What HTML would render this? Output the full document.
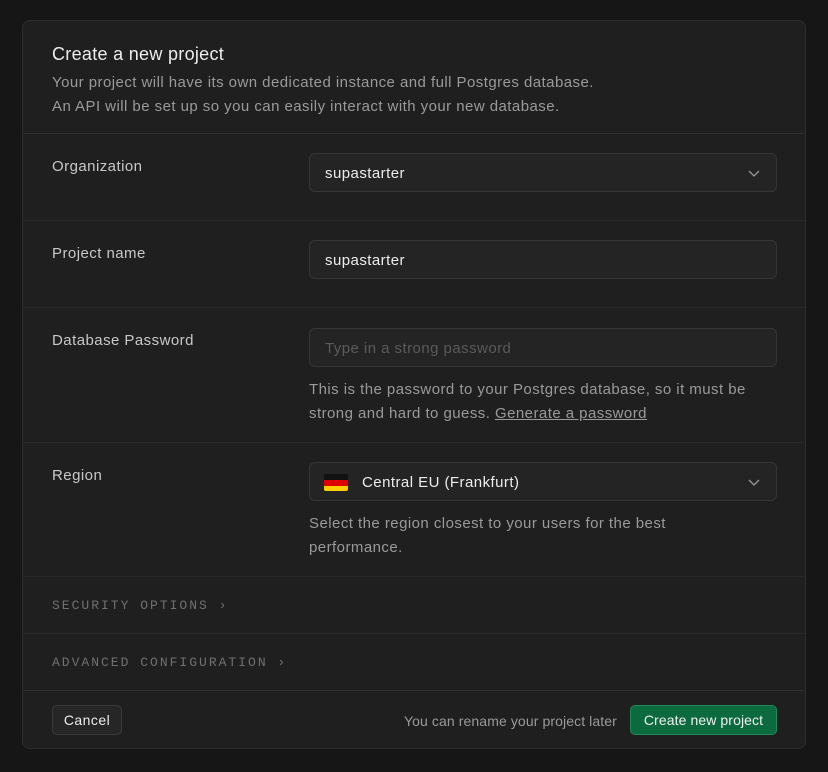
<!DOCTYPE html>
<html><head><style>
*{box-sizing:border-box;margin:0;padding:0}
body{width:828px;height:772px;background:#161616;font-family:"Liberation Sans",sans-serif;position:relative;overflow:hidden;color:#ededed;letter-spacing:0.45px}
.card{position:absolute;left:22px;top:20px;width:784px;height:729px;background:#1f1f1f;border:1px solid #2e2e2e;border-radius:8px;overflow:hidden}
.a{position:absolute}
.hr{position:absolute;left:0;width:100%;height:1px;background:#292929}
.lbl{position:absolute;left:29px;font-size:15px;color:#c8c8c8}
.inp{position:absolute;left:286px;width:468px;height:39px;border:1px solid #363636;border-radius:6px;background:#242424;font-size:15px;padding:0 15px;line-height:39px;color:#ededed}
.help{position:absolute;left:286px;font-size:15px;color:#9a9a9a;line-height:24px}
.mono{position:absolute;left:29px;font-family:"Liberation Mono",monospace;font-size:13px;letter-spacing:2px;color:#707070}
.chev{position:absolute;right:16px;top:13px}
</style></head><body>
<div class="card">
 <div class="a" style="left:29px;top:23px;font-size:18px;color:#ededed;letter-spacing:0.3px">Create a new project</div>
 <div class="a" style="left:29px;top:50px;font-size:15px;color:#9a9a9a;line-height:24px">Your project will have its own dedicated instance and full Postgres database.<br>An API will be set up so you can easily interact with your new database.</div>
 <div class="hr" style="top:112px;background:#2e2e2e"></div>
 <div class="lbl" style="top:137px">Organization</div>
 <div class="inp" style="top:132px">supastarter<svg class="chev" width="12" height="12" viewBox="0 0 12 12"><path d="M1 4l5 5 5-5" fill="none" stroke="#9a9a9a" stroke-width="1.3"/></svg></div>
 <div class="hr" style="top:199px"></div>
 <div class="lbl" style="top:224px">Project name</div>
 <div class="inp" style="top:219px">supastarter</div>
 <div class="hr" style="top:286px"></div>
 <div class="lbl" style="top:311px">Database Password</div>
 <div class="inp" style="top:307px;color:#5a5a5a">Type in a strong password</div>
 <div class="help" style="top:357px">This is the password to your Postgres database, so it must be<br>strong and hard to guess. <span style="text-decoration:underline">Generate a password</span></div>
 <div class="hr" style="top:421px"></div>
 <div class="lbl" style="top:446px">Region</div>
 <div class="inp" style="top:441px;padding-left:52px">Central EU (Frankfurt)
  <div class="a" style="left:14px;top:11px;width:24px;height:17px;border-radius:2px;overflow:hidden"><div style="height:6px;background:#111"></div><div style="height:6px;background:#dd0000"></div><div style="height:5px;background:#ffce00"></div></div>
  <svg class="chev" width="12" height="12" viewBox="0 0 12 12"><path d="M1 4l5 5 5-5" fill="none" stroke="#9a9a9a" stroke-width="1.3"/></svg></div>
 <div class="help" style="top:491px">Select the region closest to your users for the best<br>performance.</div>
 <div class="hr" style="top:555px"></div>
 <div class="mono" style="top:577px">SECURITY OPTIONS ›</div>
 <div class="hr" style="top:612px"></div>
 <div class="mono" style="top:634px">ADVANCED CONFIGURATION ›</div>
 <div class="hr" style="top:669px;background:#2e2e2e"></div>
 <div class="a" style="left:29px;top:684px;width:70px;height:30px;border:1px solid #3a3a3a;border-radius:5px;background:#262626;font-size:14px;text-align:center;line-height:29px;color:#ededed">Cancel</div>
 <div class="a" style="left:381px;top:692px;font-size:14px;color:#9a9a9a;letter-spacing:0.1px">You can rename your project later</div>
 <div class="a" style="left:607px;top:684px;width:147px;height:30px;border:1px solid #1f8a55;border-radius:5px;background:#0b6b3e;font-size:14px;text-align:center;line-height:29px;color:#f0f0f0;letter-spacing:0.1px">Create new project</div>
</div>
</body></html>
